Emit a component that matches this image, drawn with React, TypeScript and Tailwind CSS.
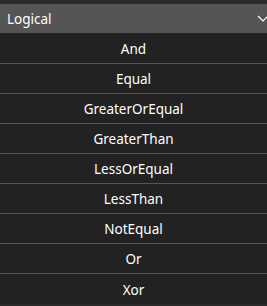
import { useState } from 'react';

const items = ['And', 'Equal', 'GreaterOrEqual', 'GreaterThan', 'LessOrEqual', 'LessThan', 'NotEqual', 'Or', 'Xor'];

function App() {
    const [selected, setSelected] = useState<string | null>(null);

    return (
        <div className="w-[267px] h-[306px] overflow-hidden bg-[#2b2b2b] pt-[4px] text-white text-[13.5px] font-['Noto_Sans',sans-serif]">
            <div className="h-[30px] bg-[#555555] border-b border-[#262626] flex items-center justify-between pl-[7px] pt-[2px]">
                <span>Logical</span>
                <svg width="12" height="7" viewBox="0 0 12 7" className="mr-[-2px] mb-[2px]">
                    <path d="M1 1 L6 6 L11 1" stroke="white" strokeWidth="1.2" fill="none" />
                </svg>
            </div>
            <ul>
                {items.map((item, i) => (
                    <li
                        key={item}
                        onClick={() => setSelected(item)}
                        className={`h-[30px] flex items-center justify-center pt-[2px] bg-[#222222] ${i < items.length - 1 ? 'border-b border-[#575757]' : ''} ${selected === item ? 'bg-[#333333]' : ''}`}
                    >
                        {item}
                    </li>
                ))}
            </ul>
        </div>
    );
}

export default App;
